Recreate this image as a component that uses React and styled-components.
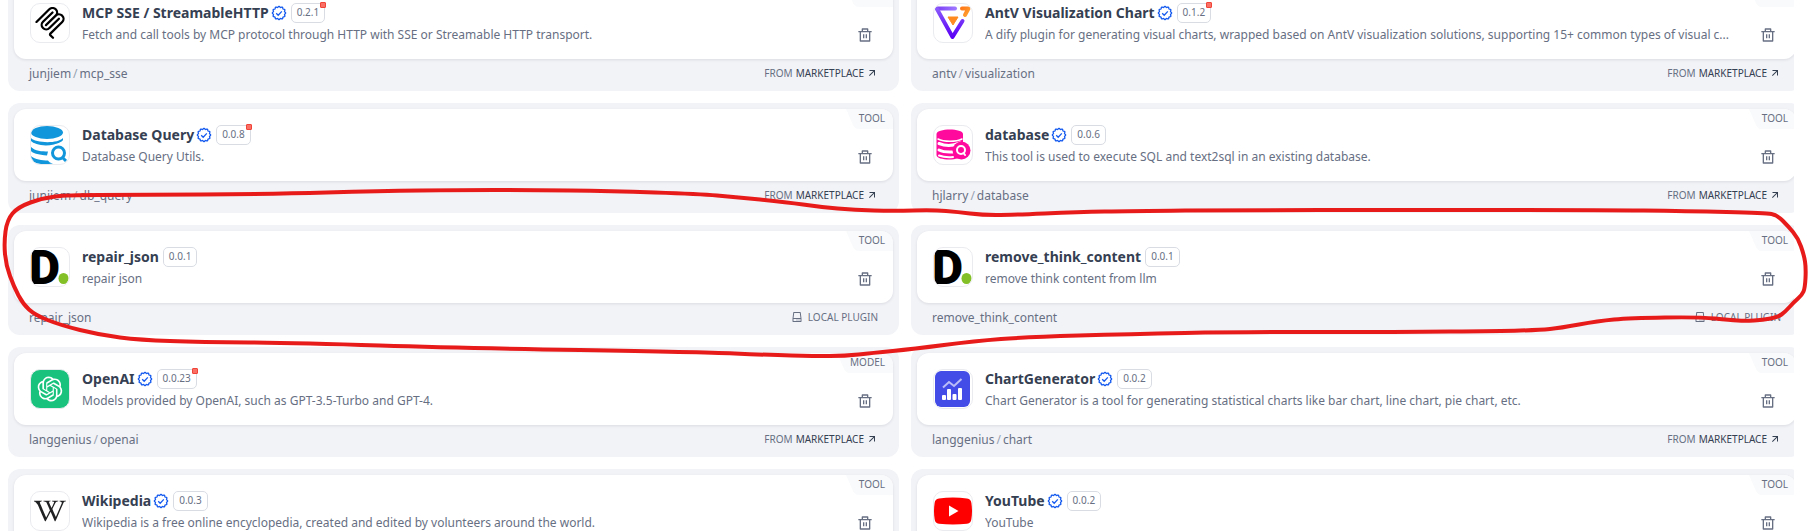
import React from "react";
import styled, { createGlobalStyle } from "styled-components";
import {
  RiArrowRightUpLine,
  RiDeleteBinLine,
  RiHardDrive3Line,
  RiOpenaiFill,
} from "react-icons/ri";
import { FaWikipediaW } from "react-icons/fa";

const GlobalStyle = createGlobalStyle`
  * {
    box-sizing: border-box;
  }
  body {
    margin: 0;
    background-color: #ffffff;
    font-family: "Noto Sans", "Open Sans", sans-serif;
    color: #354052;
  }
`;

const SPage = styled.div`
  position: relative;
  height: 100vh;
  overflow: hidden;
`;

const SScroll = styled.main`
  height: 100%;
  margin-right: 14px;
  overflow: hidden;
`;

const SGrid = styled.div`
  display: grid;
  grid-template-columns: repeat(2, minmax(0, 1fr));
  gap: 12px;
  margin: -19px -8px 0 8px;
`;

const SCard = styled.article`
  padding: 6px 6px 0;
  border-radius: 12px;
  background-color: #f2f3f7;
`;

const SBody = styled.div`
  position: relative;
  display: flex;
  gap: 12px;
  padding: 16px 16px 12px;
  border-radius: 12px;
  background-color: #ffffff;
  box-shadow: 0 1px 3px rgba(16, 24, 40, 0.1);
  overflow: hidden;
`;

const SIcon = styled.div`
  flex: none;
  width: 40px;
  height: 40px;
  border: 1px solid #eaebef;
  border-radius: 10px;
  background-color: ${(props) => props.$color || "#ffffff"};
  display: flex;
  align-items: center;
  justify-content: center;
  overflow: hidden;

  svg {
    flex: none;
  }
`;

const SInfo = styled.div`
  flex: 1;
  min-width: 0;
`;

const STitleRow = styled.div`
  display: flex;
  align-items: center;
  height: 20px;

  svg {
    flex: none;
    margin-left: 2px;
  }
`;

const STitle = styled.h3`
  margin: 0;
  font-size: 14px;
  font-weight: 700;
  line-height: 20px;
  white-space: nowrap;
`;

const SVersion = styled.span`
  position: relative;
  margin-left: 4px;
  padding: 0 5px;
  height: 20px;
  border: 1px solid #d9dce3;
  border-radius: 5px;
  font-size: 10px;
  line-height: 16px;
  color: #676f83;
`;

const SDot = styled.i`
  position: absolute;
  top: -2px;
  right: -2px;
  width: 6px;
  height: 6px;
  border: 1px solid #f04438;
  border-radius: 1px;
  background-color: #f97066;
`;

const SDescRow = styled.div`
  display: flex;
  align-items: center;
  justify-content: space-between;
  gap: 8px;
  height: 24px;
`;

const SDesc = styled.p`
  margin: 0;
  font-size: 12px;
  line-height: 20px;
  color: #676f83;
  white-space: nowrap;
  overflow: hidden;
  text-overflow: ellipsis;
`;

const SDelete = styled.button`
  flex: none;
  display: flex;
  padding: 4px;
  border: none;
  background: none;
  color: #676f83;
  font-size: 16px;
  cursor: pointer;
`;

const SCorner = styled.div`
  position: absolute;
  top: 0;
  right: 0;
  display: flex;
  height: 20px;
`;

const SCornerLabel = styled.span`
  padding-right: 8px;
  background-color: #f9fafb;
  font-size: 10px;
  line-height: 18px;
  color: #676f83;
`;

const SFooter = styled.footer`
  display: flex;
  align-items: center;
  justify-content: space-between;
  height: 32px;
  padding: 0 15px 4px;
  font-size: 12px;
  color: #676f83;
`;

const SSlash = styled.span`
  margin: 0 2px;
  color: #98a2b2;
`;

const SSource = styled.div`
  display: flex;
  align-items: center;
  gap: 3px;
  font-size: 10px;
`;

const SLocal = styled(SSource)`
  gap: 5px;

  svg {
    font-size: 12px;
  }
`;

const SLink = styled.a`
  display: flex;
  align-items: center;
  gap: 2px;
  color: #354052;
  text-decoration: none;

  svg {
    font-size: 12px;
  }
`;

const SMarker = styled.svg`
  position: absolute;
  inset: 0;
  width: 100%;
  height: 100%;
  pointer-events: none;
`;

const McpLogo = () => (
  <svg width="32" height="32" viewBox="0 0 24 24" fill="#000">
    <path d="M15.688 2.343a2.588 2.588 0 00-3.61 0l-9.626 9.44a.863.863 0 01-1.203 0 .823.823 0 010-1.18l9.626-9.44a4.313 4.313 0 016.016 0 4.116 4.116 0 011.204 3.54 4.3 4.3 0 013.609 1.18l.05.05a4.115 4.115 0 010 5.9l-8.706 8.537a.274.274 0 000 .393l1.788 1.754a.823.823 0 010 1.18.863.863 0 01-1.203 0l-1.788-1.753a1.92 1.92 0 010-2.754l8.706-8.538a2.47 2.47 0 000-3.54l-.05-.049a2.588 2.588 0 00-3.607-.003l-7.172 7.034-.002.002-.098.097a.863.863 0 01-1.204 0 .823.823 0 010-1.18l7.273-7.133a2.47 2.47 0 00-.003-3.537z" />
    <path d="M14.485 4.703a.823.823 0 000-1.18.863.863 0 00-1.204 0l-7.119 6.982a4.115 4.115 0 000 5.9 4.314 4.314 0 006.016 0l7.12-6.982a.823.823 0 000-1.18.863.863 0 00-1.204 0l-7.119 6.982a2.588 2.588 0 01-3.61 0 2.47 2.47 0 010-3.54l7.12-6.982z" />
  </svg>
);

const AntvLogo = () => (
  <svg width="40" height="40" viewBox="0 0 40 40" fill="none">
    <defs>
      <linearGradient id="antvTop" gradientUnits="userSpaceOnUse" x1="3" y1="5" x2="24" y2="5">
        <stop offset="0" stopColor="#7a3cf5" />
        <stop offset="1" stopColor="#a07bff" />
      </linearGradient>
      <linearGradient id="antvSide" x1="0" y1="0" x2="0" y2="1">
        <stop offset="0" stopColor="#8a58fb" />
        <stop offset="1" stopColor="#5a00f5" />
      </linearGradient>
      <linearGradient id="antvWarm" x1="0" y1="0" x2="1" y2="1">
        <stop offset="0" stopColor="#ff7a1a" />
        <stop offset="1" stopColor="#ffa234" />
      </linearGradient>
    </defs>
    <g strokeLinecap="round" strokeLinejoin="round" strokeWidth="4">
      <path d="M4 5.500H22" stroke="url(#antvTop)" />
      <path d="M4 6L19.500 34L29.500 18" stroke="url(#antvSide)" />
      <path d="M29 5.500H35.500L32 12" stroke="url(#antvWarm)" />
    </g>
    <path d="M15 14H25L20 22Z" fill="#ff8a1f" stroke="#ff8a1f" strokeLinejoin="round" />
  </svg>
);

const DbQueryLogo = () => (
  <svg width="40" height="40" viewBox="0 0 40 40" fill="none">
    <g fill="#1296db">
      <ellipse cx="17" cy="7.500" rx="16" ry="6.500" />
      <path d="M1 13C5 18 28 19 33 13V15C32 17 27 18.500 24 19.500C13 22 4 19 1 16Z" />
      <path d="M1 22C5 26 12 26.500 18 26.500L17 30.500C9 30 1 28 1 25.500Z" />
      <path d="M1 31C5 34.500 12 35.500 18 35.500C19 37 20.500 38 23 38.500C14 40 1 39 1 34Z" />
    </g>
    <circle cx="28.500" cy="28" r="6" stroke="#1296db" strokeWidth="3" />
    <path d="M32.500 32.500L36 36" stroke="#1296db" strokeWidth="3" />
  </svg>
);

const DatabaseLogo = () => (
  <svg width="40" height="40" viewBox="0 0 40 40" fill="none">
    <path d="M3.500 9C3.500 3 30 3 30 9V30C28 36 3.500 36 3.500 30Z" fill="#ff0a9d" />
    <g stroke="#fff" strokeLinecap="round">
      <path d="M5 14C11 17 23 17 29 14" strokeWidth="1.500" />
      <path d="M6 18.500C12 21 20 21 27 18" strokeWidth="3" />
      <path d="M6 25C10 27 15 27.300 20 27" strokeWidth="3" />
      <path d="M6 30.500C10 32 15 32.500 20 32" strokeWidth="2" />
    </g>
    <circle cx="28.500" cy="25.500" r="9" fill="#ff0a9d" />
    <circle cx="28" cy="25" r="4" stroke="#fff" strokeWidth="2" />
    <path d="M30.500 28L32 30" stroke="#fff" strokeWidth="2" strokeLinecap="round" />
  </svg>
);

const DLogo = () => (
  <svg width="40" height="40" viewBox="0 0 40 40">
    <text x="-1" y="37" fontFamily="Roboto, sans-serif" fontSize="48" fontWeight="900">
      D
    </text>
    <ellipse cx="33.500" cy="31.500" rx="5" ry="5.500" fill="#83bf26" />
  </svg>
);

const ChartLogo = () => (
  <svg width="38" height="38" viewBox="0 0 38 38" fill="none">
    <rect x="1" y="1" width="35" height="36" rx="6" fill="#444ce7" />
    <path d="M9 17.500L15 12L20 16L27.500 9" stroke="#b9bcf6" strokeWidth="2" />
    <g fill="#fff">
      <rect x="8" y="25" width="4" height="5" rx="1" />
      <rect x="13" y="19" width="4" height="11" rx="1" />
      <rect x="18.500" y="24" width="4" height="6" rx="1" />
      <rect x="24" y="18" width="4" height="12" rx="1" />
    </g>
  </svg>
);

const YoutubeLogo = () => (
  <svg width="38" height="38" viewBox="0 0 38 38">
    <path d="M5 6.500C14 5.300 24 5.300 33 6.500C36 7 37 8.500 37.400 11C38.200 17 38.200 22 37.400 27C37 30 36 31.400 33 31.800C24 32.800 14 32.800 5 31.800C2 31.400 1 30 .6 27C-.2 22-.2 17 .6 11C1 8.500 2 7 5 6.500Z" fill="#ff0000" />
    <path d="M15 13.500L24.500 19L15 24.500Z" fill="#fff" />
  </svg>
);

// scalloped ring around the tick
const scallop = Array.from({ length: 72 }, (_, i) => {
  const angle = (i / 72) * Math.PI * 2;
  const r = 6.2 + 0.5 * Math.cos(angle * 12);
  return `${(8 + r * Math.cos(angle)).toFixed(2)},${(8 + r * Math.sin(angle)).toFixed(2)}`;
}).join(" ");

const Verified = () => (
  <svg width="16" height="16" viewBox="0 0 16 16" fill="none" stroke="#155aef">
    <polygon points={scallop} strokeWidth="1.300" strokeLinejoin="round" />
    <path d="M5.200 8.200L7.200 10.200L10.800 6.400" strokeWidth="1.300" />
  </svg>
);

const MARKER_POINTS = [
  [4, 243], [7, 220], [18, 207], [43, 198], [67, 195], [130, 195], [273, 194],
  [380, 191], [460, 190], [530, 190], [610, 191], [700, 194], [734, 197],
  [786, 202], [820, 207], [855, 210], [893, 211], [934, 210], [958, 212],
  [982, 215], [1010, 215], [1079, 212], [1130, 211], [1240, 210], [1400, 210],
  [1600, 210], [1687, 211], [1766, 213], [1777, 215], [1788, 226], [1798, 238],
  [1804, 255], [1806, 268], [1805, 288], [1802, 295], [1794, 302], [1785, 312],
  [1778, 317], [1763, 320], [1745, 321], [1730, 320], [1700, 317], [1630, 318],
  [1598, 321], [1560, 328], [1540, 330], [1500, 331], [1400, 332], [1240, 332],
  [1130, 334], [1027, 337], [975, 341], [913, 349], [872, 353], [845, 356],
  [814, 356], [769, 355], [700, 352], [460, 348], [300, 343], [200, 342],
  [140, 340], [100, 335], [60, 325], [35, 315], [23, 304], [14, 287], [6, 265],
];

const mid = (a, b) => `${(a[0] + b[0]) / 2} ${(a[1] + b[1]) / 2}`;

const markerPath = () => {
  const count = MARKER_POINTS.length;
  const start = mid(MARKER_POINTS[count - 1], MARKER_POINTS[0]);
  const curves = MARKER_POINTS.map(
    (p, i) => `Q${p[0]} ${p[1]} ${mid(p, MARKER_POINTS[(i + 1) % count])}`
  );
  return `M${start}${curves.join("")}Z`;
};

const plugins = [
  { name: "MCP SSE / StreamableHTTP", org: "junjiem", id: "mcp_sse", version: "0.2.1", type: "TOOL", verified: true, update: true, logo: <McpLogo />, desc: "Fetch and call tools by MCP protocol through HTTP with SSE or Streamable HTTP transport." },
  { name: "AntV Visualization Chart", org: "antv", id: "visualization", version: "0.1.2", type: "TOOL", verified: true, update: true, logo: <AntvLogo />, desc: "A dify plugin for generating visual charts, wrapped based on AntV visualization solutions, supporting 15+ common types of visual c..." },
  { name: "Database Query", org: "junjiem", id: "db_query", version: "0.0.8", type: "TOOL", verified: true, update: true, logo: <DbQueryLogo />, desc: "Database Query Utils." },
  { name: "database", org: "hjlarry", id: "database", version: "0.0.6", type: "TOOL", verified: true, logo: <DatabaseLogo />, desc: "This tool is used to execute SQL and text2sql in an existing database." },
  { name: "repair_json", id: "repair_json", version: "0.0.1", type: "TOOL", logo: <DLogo />, desc: "repair json" },
  { name: "remove_think_content", id: "remove_think_content", version: "0.0.1", type: "TOOL", logo: <DLogo />, desc: "remove think content from llm" },
  { name: "OpenAI", org: "langgenius", id: "openai", version: "0.0.23", type: "MODEL", verified: true, update: true, color: "#19c37d", logo: <RiOpenaiFill size={30} color="#ffffff" />, desc: "Models provided by OpenAI, such as GPT-3.5-Turbo and GPT-4." },
  { name: "ChartGenerator", org: "langgenius", id: "chart", version: "0.0.2", type: "TOOL", verified: true, logo: <ChartLogo />, desc: "Chart Generator is a tool for generating statistical charts like bar chart, line chart, pie chart, etc." },
  { name: "Wikipedia", org: "langgenius", id: "wikipedia", version: "0.0.3", type: "TOOL", verified: true, logo: <FaWikipediaW size={32} color="#202122" />, desc: "Wikipedia is a free online encyclopedia, created and edited by volunteers around the world." },
  { name: "YouTube", org: "langgenius", id: "youtube", version: "0.0.2", type: "TOOL", verified: true, logo: <YoutubeLogo />, desc: "YouTube" },
];

const PluginCard = (props) => {
  const { name, org, id, version, type, verified, update, color, logo, desc } = props;

  return (
    <SCard>
      <SBody>
        <SCorner>
          <svg width="13" height="20" viewBox="0 0 13 20" fill="#f9fafb">
            <path d="M0 0H13V20C10 20 8 18 7 16Z" />
          </svg>
          <SCornerLabel>{type}</SCornerLabel>
        </SCorner>
        <SIcon $color={color}>{logo}</SIcon>
        <SInfo>
          <STitleRow>
            <STitle>{name}</STitle>
            {verified && <Verified />}
            <SVersion>
              {version}
              {update && <SDot />}
            </SVersion>
          </STitleRow>
          <SDescRow>
            <SDesc>{desc}</SDesc>
            <SDelete type="button" aria-label={`Delete ${name}`}>
              <RiDeleteBinLine />
            </SDelete>
          </SDescRow>
        </SInfo>
      </SBody>
      <SFooter>
        <div>
          {org && (
            <>
              {org}
              <SSlash>/</SSlash>
            </>
          )}
          {id}
        </div>
        {org ? (
          <SSource>
            FROM
            <SLink href="#marketplace">
              MARKETPLACE
              <RiArrowRightUpLine />
            </SLink>
          </SSource>
        ) : (
          <SLocal>
            <RiHardDrive3Line />
            LOCAL PLUGIN
          </SLocal>
        )}
      </SFooter>
    </SCard>
  );
};

const App = () => (
  <>
    <GlobalStyle />
    <SPage>
      <SScroll>
        <SGrid>
          {plugins.map((plugin) => (
            <PluginCard key={plugin.name} {...plugin} />
          ))}
        </SGrid>
      </SScroll>
      <SMarker viewBox="0 0 1808 531" preserveAspectRatio="none">
        <path d={markerPath()} fill="none" stroke="#e81b1b" strokeWidth="4" strokeLinejoin="round" />
      </SMarker>
    </SPage>
  </>
);

export default App;
